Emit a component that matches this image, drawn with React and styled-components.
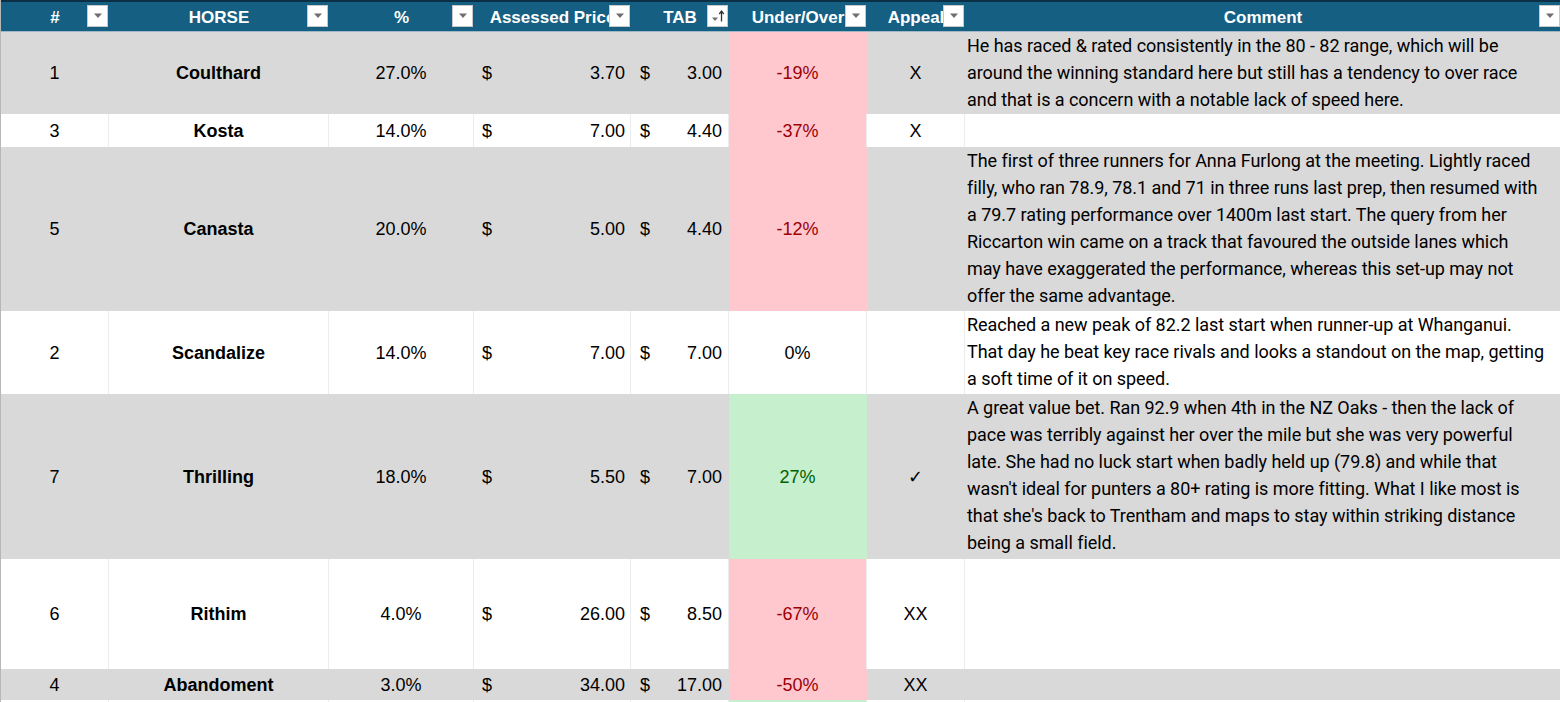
import React from "react";
import styled, { createGlobalStyle } from "styled-components";

const GlobalStyle = createGlobalStyle`
  html, body {
    margin: 0;
    padding: 0;
    width: 1560px;
    height: 702px;
    overflow: hidden;
    background: #ffffff;
  }
  * { box-sizing: border-box; }
`;

const COLS = "108px 220px 145px 157px 98px 138px 98px 596px";

const Sheet = styled.div`
  width: 1560px;
  border-left: 1px solid #b7b7b7;
  font-family: "Liberation Sans", Arial, sans-serif;
  color: #000;
`;

const HeaderRow = styled.div`
  display: grid;
  grid-template-columns: ${COLS};
  height: 32px;
  background: #156082;
  border-top: 2px solid #0b2f44;
  border-bottom: 1px solid #9fb6c4;
`;

const HeadCell = styled.div`
  position: relative;
  display: flex;
  align-items: center;
  justify-content: center;
  padding-top: 3px;
  overflow: hidden;
  white-space: nowrap;
  color: #ffffff;
  font-weight: 700;
  font-size: 17px;
`;

const FilterBtn = styled.div`
  position: absolute;
  right: 1px;
  top: 3px;
  width: 21px;
  height: 22px;
  background: #ffffff;
  border: 1px solid #c8c8c8;
  display: flex;
  align-items: center;
  justify-content: center;
`;

const Row = styled.div`
  display: grid;
  grid-template-columns: ${COLS};
  height: ${(p) => p.$h}px;
  background: ${(p) => (p.$band ? "#d9d9d9" : "#ffffff")};
`;

const Cell = styled.div`
  display: flex;
  align-items: center;
  justify-content: ${(p) => p.$justify || "center"};
  padding: 1px ${(p) => p.$pr || 0}px 0 ${(p) => p.$pl || 0}px;
  font-size: 18px;
  font-weight: ${(p) => (p.$bold ? 700 : 400)};
  white-space: nowrap;
  overflow: hidden;
  border-right: 1px solid ${(p) => (p.$band ? "transparent" : "#ececec")};
  background: ${(p) =>
    p.$tone === "bad" ? "#ffc7ce" : p.$tone === "good" ? "#c6efce" : "transparent"};
  color: ${(p) =>
    p.$tone === "bad" ? "#9c0006" : p.$tone === "good" ? "#006100" : "#000"};
`;

const CommentCell = styled.div`
  padding: 0 0 0 2px;
  font-family: "Roboto", "Liberation Sans", sans-serif;
  font-size: 18px;
  letter-spacing: -0.05px;
  line-height: 27px;
  white-space: nowrap;
  overflow: hidden;
`;

const Line = styled.div``;

const Tri = () => (
  <svg width="10" height="6" viewBox="0 0 10 6">
    <path d="M1 0.5 L9 0.5 L5 5 Z" fill="#6e6e6e" />
  </svg>
);

const SortIcon = () => (
  <svg width="16" height="16" viewBox="0 0 16 16">
    <path d="M2 9.5 L8 9.5 L5 13 Z" fill="#6e6e6e" />
    <path d="M11.5 13.5 V3.5" stroke="#333" strokeWidth="1.3" fill="none" />
    <path d="M9.3 6 L11.5 3 L13.7 6" stroke="#333" strokeWidth="1.3" fill="none" />
  </svg>
);

const headers = [
  { label: "#" },
  { label: "HORSE" },
  { label: "%" },
  { label: "Assessed Price" },
  { label: "TAB", sort: true },
  { label: "Under/Over" },
  { label: "Appeal" },
  { label: "Comment" },
];

const rows = [
  {
    no: "1", horse: "Coulthard", pct: "27.0%", price: "3.70", tab: "3.00",
    uo: "-19%", tone: "bad", appeal: "X", h: 82, band: true,
    comment: [
      "He has raced & rated consistently in the 80 - 82 range, which will be",
      "around the winning standard here but still has a tendency to over race",
      "and that is a concern with a notable lack of speed here.",
    ],
  },
  {
    no: "3", horse: "Kosta", pct: "14.0%", price: "7.00", tab: "4.40",
    uo: "-37%", tone: "bad", appeal: "X", h: 33, band: false, comment: [],
  },
  {
    no: "5", horse: "Canasta", pct: "20.0%", price: "5.00", tab: "4.40",
    uo: "-12%", tone: "bad", appeal: "", h: 164, band: true,
    comment: [
      "The first of three runners for Anna Furlong at the meeting. Lightly raced",
      "filly, who ran 78.9, 78.1 and 71 in three runs last prep, then resumed with",
      "a 79.7 rating performance over 1400m last start. The query from her",
      "Riccarton win came on a track that favoured the outside lanes which",
      "may have exaggerated the performance, whereas this set-up may not",
      "offer the same advantage.",
    ],
  },
  {
    no: "2", horse: "Scandalize", pct: "14.0%", price: "7.00", tab: "7.00",
    uo: "0%", tone: "", appeal: "", h: 83, band: false,
    comment: [
      "Reached a new peak of 82.2 last start when runner-up at Whanganui.",
      "That day he beat key race rivals and looks a standout on the map, getting",
      "a soft time of it on speed.",
    ],
  },
  {
    no: "7", horse: "Thrilling", pct: "18.0%", price: "5.50", tab: "7.00",
    uo: "27%", tone: "good", appeal: "✓", h: 165, band: true,
    comment: [
      "A great value bet. Ran 92.9 when 4th in the NZ Oaks - then the lack of",
      "pace was terribly against her over the mile but she was very powerful",
      "late. She had no luck start when badly held up (79.8) and while that",
      "wasn't ideal for punters a 80+ rating is more fitting. What I like most is",
      "that she's back to Trentham and maps to stay within striking distance",
      "being a small field.",
    ],
  },
  {
    no: "6", horse: "Rithim", pct: "4.0%", price: "26.00", tab: "8.50",
    uo: "-67%", tone: "bad", appeal: "XX", h: 110, band: false, comment: [],
  },
  {
    no: "4", horse: "Abandoment", pct: "3.0%", price: "34.00", tab: "17.00",
    uo: "-50%", tone: "bad", appeal: "XX", h: 31, band: true, comment: [],
  },
  {
    no: "", horse: "", pct: "", price: null, tab: null,
    uo: "", tone: "good", appeal: "", h: 30, band: false, comment: [],
  },
];

const Money = ({ value, band, pl, pr }) => (
  <Cell $justify="space-between" $pl={pl} $pr={pr} $band={band}>
    {value !== null && (
      <>
        <span>$</span>
        <span>{value}</span>
      </>
    )}
  </Cell>
);

export default function App() {
  return (
    <>
      <GlobalStyle />
      <Sheet>
        <HeaderRow>
          {headers.map((h) => (
            <HeadCell key={h.label}>
              {h.label}
              <FilterBtn>{h.sort ? <SortIcon /> : <Tri />}</FilterBtn>
            </HeadCell>
          ))}
        </HeaderRow>
        {rows.map((r, i) => (
          <Row key={i} $h={r.h} $band={r.band}>
            <Cell $band={r.band}>{r.no}</Cell>
            <Cell $band={r.band} $bold>{r.horse}</Cell>
            <Cell $band={r.band}>{r.pct}</Cell>
            <Money value={r.price} band={r.band} pl={8} pr={5} />
            <Money value={r.tab} band={r.band} pl={9} pr={6} />
            <Cell $band={r.band} $tone={r.tone}>{r.uo}</Cell>
            <Cell $band={r.band}>{r.appeal}</Cell>
            <CommentCell>
              {r.comment.map((l, j) => (
                <Line key={j}>{l}</Line>
              ))}
            </CommentCell>
          </Row>
        ))}
      </Sheet>
    </>
  );
}
